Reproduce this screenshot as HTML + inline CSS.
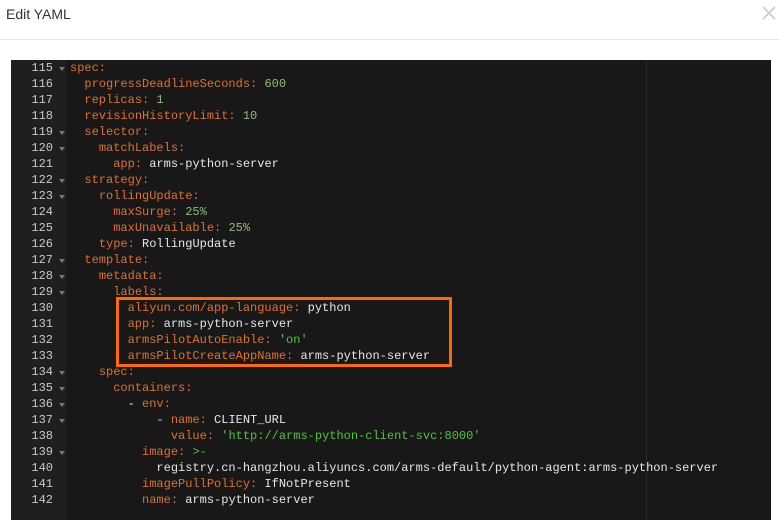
<!DOCTYPE html>
<html><head><meta charset="utf-8"><style>
body{margin:0;width:779px;height:508px;background:#fff;overflow:hidden;position:relative;font-family:"Liberation Sans",sans-serif}
.title{position:absolute;left:6px;top:6px;font-size:14px;color:#333}
.close{position:absolute;left:761px;top:5px;width:16px;height:16px}
.hr{position:absolute;left:0;top:39px;width:779px;height:1px;background:#e5e5e5}
.ed{position:absolute;left:11px;top:60px;width:760px;height:460px;background:#181818;overflow:hidden}
.gut{position:absolute;left:0;top:0;width:55px;height:100%;background:#1f1f1f}
.margin{position:absolute;left:635px;top:0;width:1px;height:100%;background:#2a2a2a}
.code{position:absolute;top:0;left:0;font-family:"Liberation Mono",monospace;font-size:12px;color:#e6e6e6}
.l{height:16px;line-height:16px;white-space:pre;overflow:hidden}
.n{display:inline-block;width:42px;text-align:right;color:#c8c8c8;height:16px;vertical-align:top}
.f{display:inline-block;width:17px;height:16px;vertical-align:top;position:relative}
.f.a::after{content:"";position:absolute;left:6px;top:7px;border-left:3px solid transparent;border-right:3px solid transparent;border-top:4px solid #777}
.k{color:#e0702a}.v{color:#8fbc7a}.s{color:#4ec33a}
.box{position:absolute;left:116px;top:297px;width:330px;height:64px;border:3px solid #ff6a00}
</style></head><body>
<div class="title">Edit YAML</div>
<svg class="close" viewBox="0 0 16 16"><path d="M2 2L14 14M14 2L2 14" stroke="#ccc" stroke-width="1.6"/></svg>
<div class="hr"></div>
<div class="ed"><div class="gut"></div><div class="margin"></div>
<div class="code">
<div class="l"><span class="n">115</span><span class="f a"></span><span class="k">spec:</span></div>
<div class="l"><span class="n">116</span><span class="f"></span>  <span class="k">progressDeadlineSeconds:</span> <span class="v">600</span></div>
<div class="l"><span class="n">117</span><span class="f"></span>  <span class="k">replicas:</span> <span class="v">1</span></div>
<div class="l"><span class="n">118</span><span class="f"></span>  <span class="k">revisionHistoryLimit:</span> <span class="v">10</span></div>
<div class="l"><span class="n">119</span><span class="f a"></span>  <span class="k">selector:</span></div>
<div class="l"><span class="n">120</span><span class="f a"></span>    <span class="k">matchLabels:</span></div>
<div class="l"><span class="n">121</span><span class="f"></span>      <span class="k">app:</span> arms-python-server</div>
<div class="l"><span class="n">122</span><span class="f a"></span>  <span class="k">strategy:</span></div>
<div class="l"><span class="n">123</span><span class="f a"></span>    <span class="k">rollingUpdate:</span></div>
<div class="l"><span class="n">124</span><span class="f"></span>      <span class="k">maxSurge:</span> <span class="v">25%</span></div>
<div class="l"><span class="n">125</span><span class="f"></span>      <span class="k">maxUnavailable:</span> <span class="v">25%</span></div>
<div class="l"><span class="n">126</span><span class="f"></span>    <span class="k">type:</span> RollingUpdate</div>
<div class="l"><span class="n">127</span><span class="f a"></span>  <span class="k">template:</span></div>
<div class="l"><span class="n">128</span><span class="f a"></span>    <span class="k">metadata:</span></div>
<div class="l"><span class="n">129</span><span class="f a"></span>      <span class="k">labels:</span></div>
<div class="l"><span class="n">130</span><span class="f"></span>        <span class="k">aliyun.com/app-language:</span> python</div>
<div class="l"><span class="n">131</span><span class="f"></span>        <span class="k">app:</span> arms-python-server</div>
<div class="l"><span class="n">132</span><span class="f"></span>        <span class="k">armsPilotAutoEnable:</span> <span class="s">'on'</span></div>
<div class="l"><span class="n">133</span><span class="f"></span>        <span class="k">armsPilotCreateAppName:</span> arms-python-server</div>
<div class="l"><span class="n">134</span><span class="f a"></span>    <span class="k">spec:</span></div>
<div class="l"><span class="n">135</span><span class="f a"></span>      <span class="k">containers:</span></div>
<div class="l"><span class="n">136</span><span class="f a"></span>        - <span class="k">env:</span></div>
<div class="l"><span class="n">137</span><span class="f a"></span>            - <span class="k">name:</span> CLIENT_URL</div>
<div class="l"><span class="n">138</span><span class="f"></span>              <span class="k">value:</span> <span class="s">'http://arms-python-client-svc:8000'</span></div>
<div class="l"><span class="n">139</span><span class="f a"></span>          <span class="k">image:</span> <span class="s">&gt;-</span></div>
<div class="l"><span class="n">140</span><span class="f"></span>            registry.cn-hangzhou.aliyuncs.com/arms-default/python-agent:arms-python-server</div>
<div class="l"><span class="n">141</span><span class="f"></span>          <span class="k">imagePullPolicy:</span> IfNotPresent</div>
<div class="l"><span class="n">142</span><span class="f"></span>          <span class="k">name:</span> arms-python-server</div>
</div></div>
<div class="box"></div>
</body></html>
